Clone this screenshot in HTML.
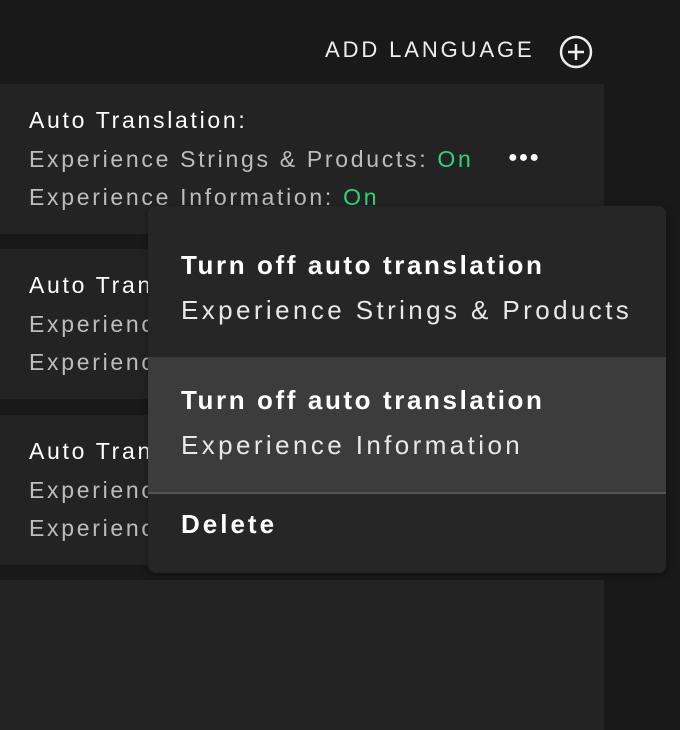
<!DOCTYPE html>
<html><head><style>
body{margin:0;width:680px;height:586px;background:#191919;position:relative;overflow:hidden;font-family:"Liberation Sans",sans-serif;}
.hdr{position:absolute;left:325px;top:37px;color:#eee;font-size:22px;letter-spacing:2.9px;white-space:nowrap;}
.plus{position:absolute;left:559px;top:35px;}
.card{position:absolute;left:0;width:604px;height:150px;background:#232323;}
.t{position:absolute;left:29px;color:#fff;font-size:23px;letter-spacing:2.7px;white-space:nowrap;}
.s{position:absolute;left:29px;color:#bdbdbd;font-size:23px;letter-spacing:2.7px;white-space:nowrap;}
.g{color:#2ed47a;}
.menu{position:absolute;left:148px;top:206px;width:518px;height:367px;background:#262626;border-radius:8px;overflow:hidden;box-shadow:0 2px 8px rgba(0,0,0,.4);}
.hov{position:absolute;left:0;top:151px;width:518px;height:135px;background:#3c3c3c;border-bottom:2px solid #555;}
.mt{position:absolute;left:33px;color:#fff;font-size:26px;font-weight:bold;white-space:nowrap;letter-spacing:2.6px;}
.ms{position:absolute;left:33px;color:#e8e8e8;font-size:26px;white-space:nowrap;letter-spacing:3.4px;}
</style></head><body>
<div class="hdr">ADD LANGUAGE</div>
<svg class="plus" width="34" height="34" viewBox="0 0 34 34"><circle cx="17" cy="17" r="15" fill="none" stroke="#eee" stroke-width="2.5"/><path d="M17 9v16M9 17h16" stroke="#eee" stroke-width="2.5"/></svg>
<div class="card" style="top:84px">
<div class="t" style="top:23px">Auto Translation:</div>
<div class="s" style="top:62px">Experience Strings &amp; Products: <span class="g">On</span></div>
<div class="s" style="top:100px">Experience Information: <span class="g">On</span></div>
<div style="position:absolute;left:508px;top:65px;color:#fff;font-size:16px;letter-spacing:1px">●●●</div>
</div>
<div class="card" style="top:249px">
<div class="t" style="top:23px">Auto Translation:</div>
<div class="s" style="top:62px">Experience Strings</div>
<div class="s" style="top:100px">Experience Information</div>
</div>
<div class="card" style="top:415px">
<div class="t" style="top:23px">Auto Translation:</div>
<div class="s" style="top:62px">Experience Strings</div>
<div class="s" style="top:100px">Experience Information</div>
</div>
<div class="card" style="top:580px"></div>
<div class="menu">
<div class="mt" style="top:44px">Turn off auto translation</div>
<div class="ms" style="top:89px">Experience Strings &amp; Products</div>
<div class="hov"></div>
<div class="mt" style="top:179px">Turn off auto translation</div>
<div class="ms" style="top:224px">Experience Information</div>
<div class="mt" style="top:303px;letter-spacing:3px">Delete</div>
</div>
</body></html>
